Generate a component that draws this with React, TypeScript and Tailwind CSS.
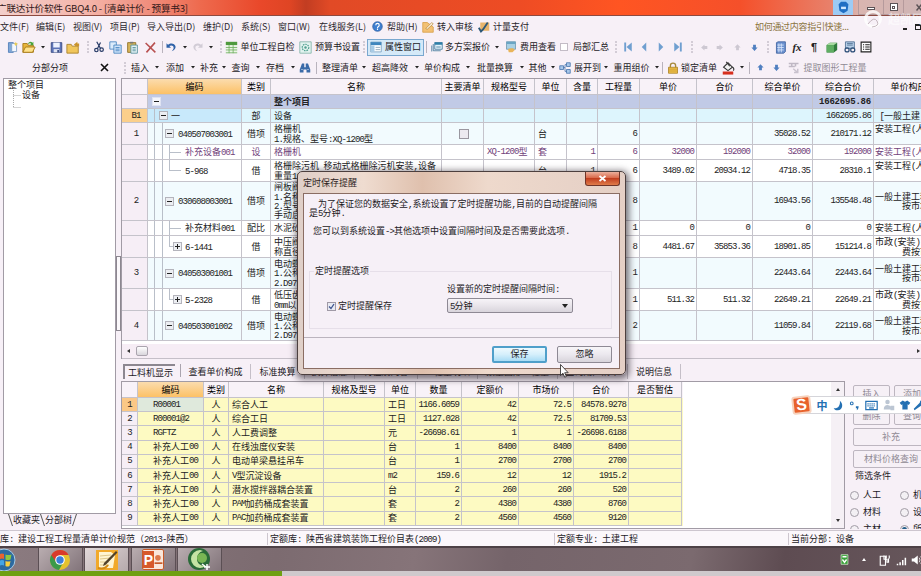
import { ReactNode } from "react";
import clsx from "clsx";

// latin characters are drawn half as wide as the chinese ones
function Txt({ children }: { children: string }) {
  return (
    <>
      {children.split(/([\x20-\x7e]+)/).map((part, i) =>
        i % 2 ? (
          <span
            key={i}
            className="whitespace-pre font-['Liberation_Mono','Noto_Sans_CJK_SC',monospace] leading-[0] tracking-[-0.9px]"
          >
            {part}
          </span>
        ) : (
          part
        ),
      )}
    </>
  );
}

type SvgProps = { children: ReactNode; size?: number };

function Svg({ children, size = 13 }: SvgProps) {
  return (
    <svg width={size} height={size} viewBox="0 0 16 16" fill="none" className="shrink-0">
      {children}
    </svg>
  );
}

const Caret = () => (
  <svg width="4" height="3" viewBox="0 0 4 3">
    <path d="M0 0h4L2 2.6z" fill="#222" />
  </svg>
);
const Sep = () => <span className="h-3 w-px bg-[#b9b3bd]" />;
const Grip = () => <span className="h-3 border-l-2 border-dotted border-[#d3ccd6]" />;

const IconNew = () => (
  <Svg>
    <path d="M3 2h6v12H3z" fill="#7fa8d8" stroke="#4a79b5" />
    <path d="M7 3h6v10H7z" fill="#f4f8ff" stroke="#7b9cc6" />
    <path d="M12 1l1 2 2 .5-2 1-1 2-.8-2-2-1 2-.5z" fill="#f2cf4a" />
  </Svg>
);
const IconOpen = () => (
  <Svg size={14}>
    <path d="M1 4h5l1 2h6v8H1z" fill="#e8b53a" stroke="#a57818" />
    <path d="M1 14l3-6h11l-3 6z" fill="#ffe28a" stroke="#a57818" />
    <path d="M7 5c0-3 3-4 5-2l1-1v4H9l1.500-1.500C10 3.500 8.500 3.500 7 5z" fill="#49a33a" />
  </Svg>
);
const IconSave = () => (
  <Svg>
    <path d="M1.500 2h13v12h-13z" fill="#5d74b8" stroke="#34467e" />
    <path d="M4 2h8v6H4z" fill="#eef3ff" />
    <path d="M4.500 10h7v4h-7z" fill="#dfe4f2" />
    <path d="M9 11h2v3H9z" fill="#34467e" />
  </Svg>
);
const IconFolder = () => (
  <Svg size={14}>
    <path d="M1 5h5l1 2h7v8H1z" fill="#f1c65b" stroke="#a9802a" />
    <path d="M9 5l4-3v2h2v3h-4z" fill="#c9932c" />
  </Svg>
);
const IconCut = () => (
  <Svg size={12}>
    <path d="M5 1l5 9M10 2L6 10" stroke="#263a66" strokeWidth="1.600" />
    <circle cx="4.500" cy="12" r="2.300" stroke="#263a66" strokeWidth="1.600" />
    <circle cx="11.500" cy="11.500" r="2.300" stroke="#263a66" strokeWidth="1.600" />
  </Svg>
);
const IconCopy = () => (
  <Svg>
    <path d="M1 1h8v9H1z" fill="#dcebfb" stroke="#3f7fbd" />
    <path d="M6 5h9v10H6z" fill="#cfe3fa" stroke="#3f7fbd" />
    <path d="M8 8h5M8 10h5M8 12h5" stroke="#3f7fbd" />
  </Svg>
);
const IconPaste = () => (
  <Svg>
    <path d="M2 2h10v12H2z" fill="#d6b45a" stroke="#8a6a1e" />
    <path d="M5 1h4v2H5z" fill="#777" />
    <path d="M6 5h8v10H6z" fill="#e4f1f4" stroke="#4b8a98" />
    <path d="M8 8h4M8 10h4M8 12h4" stroke="#4b8a98" />
  </Svg>
);
const IconDelete = () => (
  <Svg size={13}>
    <path d="M2 2.500L14 14M13.500 2L3 14" stroke="#b85050" strokeWidth="1.900" />
  </Svg>
);
const IconUndo = ({ color = "#2f62a8" }: { color?: string }) => (
  <Svg size={12}>
    <path d="M2 3v6h6L5.800 6.800C8 5 11.500 6 11.500 9c0 2-1 3-2.500 4.500 4-1 5.500-4 5-6.500C13 3 7.500 1.800 4 5z" fill={color} />
  </Svg>
);
const IconRedo = () => (
  <span className="flex -scale-x-100">
    <IconUndo color="#d2ccd6" />
  </span>
);
const IconCheckTable = () => (
  <Svg>
    <path d="M1 1h14v14H1z" fill="#e9f5e4" />
    <path d="M1 1h14v4H1z" fill="#4f9a3e" />
    <path d="M1 8h14M1 11h14M1 14.500h14M5 5v10M10 5v10" stroke="#6fae5f" />
  </Svg>
);
const IconSettings = () => (
  <Svg>
    <path d="M1 1h14v14H1z" fill="#e2f3ef" stroke="#7fb3a6" />
    <circle cx="8" cy="8" r="4" stroke="#4f9f8f" strokeWidth="1.500" strokeDasharray="2 1" />
    <circle cx="8" cy="8" r="1.500" fill="#4f9f8f" />
  </Svg>
);
const IconWindow = () => (
  <Svg size={12}>
    <path d="M1 1.500h14v13H1z" fill="#fff" stroke="#6d95b8" />
    <path d="M1 1.500h14v4H1z" fill="#3f86bd" />
    <path d="M1 6h5v8.500H1z" fill="#a7cbe6" />
    <path d="M7.500 8.500h6M7.500 11.500h6" stroke="#7b95ab" />
  </Svg>
);
const IconPlans = () => (
  <Svg size={12}>
    <path d="M5 2h10v9H5z" fill="#e3f2fb" stroke="#2d6c92" />
    <path d="M5 2h10v3H5z" fill="#2d7fa8" />
    <path d="M3 4v9h10M1 6v8" stroke="#2d6c92" />
    <path d="M7 8h6" stroke="#2d6c92" />
  </Svg>
);
const IconCost = () => (
  <Svg size={12}>
    <path d="M2 1h12v10H2z" fill="#a8d0e4" stroke="#6a93aa" />
    <path d="M2 1h12v3H2z" fill="#6aa5c4" />
    <path d="M4 11c3-2 8-2 9 1l-3 3H5z" fill="#e9b45a" />
  </Svg>
);
const IconBars = () => (
  <Svg size={12}>
    <path d="M3 2h2.500v12H3z" fill="#6f9fd0" />
    <path d="M13 2v12L6 8z" fill="#6f9fd0" />
  </Svg>
);
const IconTri = () => (
  <Svg size={12}>
    <path d="M11 2v12L5 8z" fill="#6f9fd0" />
  </Svg>
);
const IconArrow = ({ color = "#cdc8d2", cls = "" }: { color?: string; cls?: string }) => (
  <span className={cls}>
    <Svg size={9}>
      <path d="M8 2l5.500 6H10.500v5h-5V8H2.500z" fill={color} />
    </Svg>
  </span>
);
const IconCalc = () => (
  <Svg>
    <path d="M3 2l2-1h9v12l-2 2H3z" fill="#6c92d0" stroke="#3b5f9c" />
    <path d="M4 5h8M4 8h8M4 11h8M6 3v11M9 3v11" stroke="#dbe7fb" />
  </Svg>
);
const IconCube = () => (
  <Svg>
    <path d="M2 5l4-3h9v9l-4 3H2z" fill="#2f7a3c" />
    <path d="M2 5h9v9H2z" fill="#5fae62" />
    <path d="M2 5l4-3h9l-4 3z" fill="#a7d9a0" />
  </Svg>
);
const IconReport = () => (
  <Svg>
    <path d="M3 1h11v8H3z" fill="#b7cfe8" stroke="#49698c" />
    <path d="M5 3h7M5 5h7" stroke="#49698c" />
    <circle cx="5" cy="11" r="2.500" stroke="#2d4f78" strokeWidth="1.500" />
    <circle cx="12" cy="11" r="2.500" stroke="#2d4f78" strokeWidth="1.500" />
  </Svg>
);
const IconList = () => (
  <Svg size={12}>
    <path d="M1.500 1.500h13v13h-13z" fill="#fff" stroke="#222" strokeWidth="1.500" />
    <path d="M4 5h1.500M7 5h6M4 8h1.500M7 8h6M4 11h1.500M7 11h6" stroke="#222" strokeWidth="1.500" />
  </Svg>
);
const IconFind = () => (
  <Svg size={12}>
    <path d="M4 2h3v5h2V2h3l3 8v4h-5v-4H6v4H1v-4z" fill="#3a6ba8" />
    <path d="M3 10h2M11 10h2" stroke="#cfe0f5" />
  </Svg>
);
const IconExpand = () => (
  <Svg size={12}>
    <path d="M1 5h5v5H1zM10 1h5v5h-5zM10 10h5v5h-5z" fill="#a8c7ea" stroke="#3f6ea8" />
    <path d="M6 7.500h2M8 3.500v9M8 3.500h2M8 12.500h2" stroke="#3f6ea8" />
  </Svg>
);
const IconLock = () => (
  <Svg size={12}>
    <path d="M4.500 8V5a3.500 3.500 0 017 0v3" stroke="#a7893c" strokeWidth="1.800" />
    <path d="M2 7h12v8H2z" fill="#eec04c" stroke="#a57c1c" />
    <path d="M2.500 9.500h11M2.500 12h11" stroke="#c8982c" />
  </Svg>
);
const IconBucket = () => (
  <Svg size={14}>
    <path d="M3 7l5-5 5 5-5 4z" fill="#f3f3f3" stroke="#333" strokeWidth="1.300" />
    <path d="M6 1l4 5M13 7c2 1 2 3 1 4" stroke="#333" strokeWidth="1.300" />
    <path d="M2 12h12v3.500H2z" fill="#d62f1e" />
  </Svg>
);
const IconExtract = () => (
  <Svg size={12}>
    <path d="M1 2h13M1 6h8M5 2v5M10 2v4" stroke="#bfb8c4" strokeWidth="2" />
    <path d="M7 9l6 5M13 9v5H8" stroke="#c9c2ce" strokeWidth="2" />
  </Svg>
);

const T = ({ children, gray }: { children: string; gray?: boolean }) => (
  <span className={gray ? "text-[#8f8993]" : "text-[#1c1a1e]"}>
    <Txt>{children}</Txt>
  </span>
);

function TitleBar() {
  return (
    <header className="relative flex h-4 shrink-0 items-center border-b border-[#8d4a40] bg-[linear-gradient(90deg,#f3cfcb_0px,#f4b3a8_90px,#f08d7c_150px,#ee6a4e_200px,#e9482a_260px,#df4524_290px,#c23d22_306px,#e14a26_330px,#ee4c24_520px,#ff5522_620px,#f5502a_740px,#e8806a_830px,#d9b5b0_860px,#cfb5b5_921px)]">
      <span className="-ml-[3px] whitespace-nowrap text-[9.600px] tracking-[-0.2px] text-[#32181a]">广联达计价软件 GBQ4.0 - [清单计价 - 预算书3]</span>
      <div className="ml-auto flex h-full">
        <span className="mr-[5px] flex w-5 items-center justify-center bg-[#9ccbf5]">
          <Svg>
            <path d="M2 4l3-3h6l3 3-1 8-5 3-5-3z" fill="#1f6fc4" />
            <path d="M5 7h6v3H5z" fill="#cfe9ff" />
          </Svg>
        </span>
        <span className="flex w-[26px] items-end justify-center border border-t-0 border-[#b59a9c] pb-1">
          <i className="h-[3px] w-2 border border-[#5c5356] bg-white" />
        </span>
        <span className="flex w-[19px] items-center justify-center border-b border-[#b59a9c]">
          <i className="flex h-2 w-2 items-center justify-center border border-[#5c5356] bg-white">
            <b className="h-[3px] w-[3px] border border-[#5c5356]" />
          </i>
        </span>
        <span className="flex w-[18px] items-center justify-end border-b border-l border-[#b59a9c]">
          <svg width="5" height="7" viewBox="0 0 5 7">
            <path d="M.5.5l5 6M5.500.5l-5 6" stroke="#5c5356" strokeWidth="1.500" />
          </svg>
        </span>
      </div>
    </header>
  );
}

function MenuBar() {
  return (
    <nav className="grid h-[21px] shrink-0 grid-cols-[36px_37px_37px_37px_56px_38px_37px_41px_53px_15px_35px_15px_41px_15px_262px_96px_1fr] items-center whitespace-nowrap text-[9px] text-[#2a262c]">
      <span>文件(F)</span>
      <span>编辑(E)</span>
      <span>视图(V)</span>
      <span>项目(P)</span>
      <span>导入导出(D)</span>
      <span>维护(D)</span>
      <span>系统(S)</span>
      <span>窗口(W)</span>
      <span>在线服务(L)</span>
      <Svg size={11}>
        <circle cx="8" cy="8" r="7" fill="#3f7fd0" stroke="#2a5a9e" />
        <path d="M5.500 6c0-3.500 5-3.500 5 0 0 2-2.500 1.800-2.500 4M8 11v2" stroke="#fff" strokeWidth="1.700" />
      </Svg>
      <span>帮助(H)</span>
      <Svg size={12}>
        <path d="M1 2h6l8 6v7H1z" fill="#f3c173" stroke="#d49a42" />
        <path d="M5 10l8-8 2 2-8 7z" fill="#fbf0d8" stroke="#b98a42" />
      </Svg>
      <span>转入审核</span>
      <Svg size={12}>
        <path d="M3 2h12v11H3z" fill="#e7b46b" />
        <path d="M1 9l3 5 3-3 6-9" stroke="#2d5877" strokeWidth="2.500" />
      </Svg>
      <span>计量支付</span>
      <span className="tracking-[-0.3px] text-[#8b7440]">如何通过内容指引快速...</span>
      <span className="flex items-center justify-end gap-2">
        <i className="mt-1 h-0.5 w-1 bg-[#222]" />
        <i className="h-1.5 w-1.5 border border-t-2 border-[#222]" />
      </span>
    </nav>
  );
}

function MainToolbar() {
  return (
    <div className="grid h-5 shrink-0 grid-cols-[16px_18px_10px_16px_18px_11px_12px_20px_15px_20px_4px_14px_13px_14px_12px_8px_13px_59px_17px_47px_6px_57px_5px_15px_47px_12px_16px_38px_14px_40px_9px_15px_17px_17px_18px_10px_14px_17px_19px_15px_12px_12px_22px_12px_22px_14px_20px] items-center justify-items-center whitespace-nowrap pl-1">
      <IconNew />
      <IconOpen />
      <Caret />
      <IconSave />
      <IconFolder />
      <Grip />
      <IconCut />
      <IconCopy />
      <IconPaste />
      <IconDelete />
      <Sep />
      <IconUndo />
      <Caret />
      <IconRedo />
      <Caret />
      <Grip />
      <IconCheckTable />
      <T>单位工程自检</T>
      <IconSettings />
      <T>预算书设置</T>
      <Grip />
      <button className="flex h-[17px] w-full items-center gap-[3px] border border-[#79a7cf] bg-[#d5e9f8] pl-0.5">
        <IconWindow />
        <T>属性窗口</T>
      </button>
      <Sep />
      <IconPlans />
      <T>多方案报价</T>
      <Caret />
      <IconCost />
      <T>费用查看</T>
      <span className="h-2 w-2 border border-[#c3bcc6] bg-white" />
      <T>局部汇总</T>
      <Grip />
      <IconBars />
      <IconTri />
      <span className="-scale-x-100">
        <IconTri />
      </span>
      <span className="-scale-x-100">
        <IconBars />
      </span>
      <Grip />
      <IconArrow cls="-rotate-90" />
      <IconArrow cls="rotate-90" />
      <IconArrow />
      <IconArrow cls="rotate-180" color="#4f7fc0" />
      <Grip />
      <IconCalc />
      <span className="font-['Liberation_Serif',serif] text-[11px] leading-none font-bold text-[#222] italic">fx</span>
      <span className="font-['Liberation_Sans',sans-serif] text-[11px] leading-none font-bold text-[#222]">¶</span>
      <IconCube />
      <IconReport />
      <IconList />
    </div>
  );
}

function SubToolbar() {
  return (
    <div className="grid h-[21px] shrink-0 grid-cols-[8px_22px_12px_24px_11px_22px_8px_25px_9px_26px_9px_16px_6px_42px_6px_46px_7px_44px_8px_46px_7px_25px_6px_17px_29px_7px_45px_5px_7px_13px_40px_18px_9px_7px_14px_18px_17px_66px] items-center justify-items-center whitespace-nowrap">
      <Grip />
      <T>插入</T>
      <Caret />
      <T>添加</T>
      <Caret />
      <T>补充</T>
      <Caret />
      <T>查询</T>
      <Caret />
      <T>存档</T>
      <Caret />
      <IconFind />
      <Sep />
      <T>整理清单</T>
      <Caret />
      <T>超高降效</T>
      <Caret />
      <T>单价构成</T>
      <Caret />
      <T>批量换算</T>
      <Caret />
      <T>其他</T>
      <Caret />
      <IconExpand />
      <T>展开到</T>
      <Caret />
      <T>重用组价</T>
      <Caret />
      <Sep />
      <IconLock />
      <T>锁定清单</T>
      <IconBucket />
      <Caret />
      <Sep />
      <IconArrow color="#4f7fc0" />
      <IconArrow color="#4f7fc0" cls="rotate-180" />
      <IconExtract />
      <T gray>提取图形工程量</T>
    </div>
  );
}

type Row = {
  h: string;
  no?: string;
  level: number;
  box?: "+" | "-";
  code: string;
  kind?: string;
  name: string[];
  spec?: string;
  unit?: string;
  per?: string;
  qty?: string;
  price?: string;
  total?: string;
  cPrice?: string;
  cTotal?: string;
  fee?: string[];
  tone?: "sum" | "part" | "item" | "extra";
};

const rows: Row[] = [
  { h: "h-3.5", level: 0, box: "-", code: "", name: ["整个项目"], cTotal: "1662695.86", tone: "sum" },
  { h: "h-3.5", no: "B1", level: 1, box: "-", code: "一", kind: "部", name: ["设备"], cTotal: "1662695.86", fee: [" [一般土建"], tone: "part" },
  { h: "h-[22px]", no: "1", level: 2, box: "-", code: "040507003001", kind: "借项", name: ["格栅机", "1.规格、型号:XQ-1200型"], unit: "台", qty: "6", cPrice: "35028.52", cTotal: "210171.12", fee: ["安装工程(人", " "], tone: "item" },
  { h: "h-[15px]", level: 3, code: "补充设备001", kind: "设", name: ["格栅机"], spec: "XQ-1200型", unit: "套", per: "1", qty: "6", price: "32000", total: "192000", cPrice: "32000", cTotal: "192000", fee: ["安装工程(人"], tone: "extra" },
  { h: "h-[22px]", level: 3, code: "5-968", kind: "借", name: ["格栅除污机 移动式格栅除污机安装,设备", "重量1t以内"], unit: "台", per: "1", qty: "6", price: "3489.02", total: "20934.12", cPrice: "4718.35", cTotal: "28310.1", fee: ["安装工程(人", " "] },
  { h: "h-[39px]", no: "2", level: 2, box: "-", code: "030608003001", kind: "借项", name: ["闸板阀", "1.名称", "2.型号", "手动启"], qty: "8", cPrice: "16943.56", cTotal: "135548.48", fee: ["一般土建工程", "      按市场"], tone: "item" },
  { h: "h-[15px]", level: 3, code: "补充材料001", kind: "配比", name: ["水泥砂"], qty: "1", price: "0", total: "0", cPrice: "0", cTotal: "0", fee: ["安装工程(人"] },
  { h: "h-[22px]", level: 3, box: "+", code: "6-1441", kind: "借", name: ["中压阀", "称直径"], qty: "8", price: "4481.67", total: "35853.36", cPrice: "18901.85", cTotal: "151214.8", fee: ["市政(安装)", "      费按市"] },
  { h: "h-[31px]", no: "3", level: 2, box: "-", code: "040503001001", kind: "借项", name: ["电动蝶", "1.公称", "2.D971"], qty: "1", cPrice: "22443.64", cTotal: "22443.64", fee: ["一般土建工程", "      按市场"], tone: "item" },
  { h: "h-[22px]", level: 3, box: "+", code: "5-2328", kind: "借", name: ["低压齿", "0mm以"], qty: "1", price: "511.32", total: "511.32", cPrice: "22649.21", cTotal: "22649.21", fee: ["市政(安装)", "      费按市"] },
  { h: "h-[30px]", no: "4", level: 2, box: "-", code: "040503001002", kind: "借项", name: ["电动蝶", "1.公称", "2.D971"], qty: "2", cPrice: "11059.84", cTotal: "22119.68", fee: ["一般土建工程", "      按市场"], tone: "item" },
];

const indent = ["pl-1", "pl-[11px]", "pl-[17px]", "pl-[25px]"];

const gridCols =
  "grid grid-cols-[26px_94px_29px_171px_42px_51px_32px_31px_42px_57px_56px_60px_61px_70px]";

function Cell({ children, right, className }: { children?: ReactNode; right?: boolean; className?: string }) {
  return (
    <div
      className={clsx(
        "flex min-w-0 items-center overflow-hidden border-r border-b border-[#c5c3cb] whitespace-nowrap",
        right ? "justify-end pr-0.5" : "pl-[3px]",
        className,
      )}
    >
      {children}
    </div>
  );
}

function Lines({ lines, className }: { lines: string[]; className?: string }) {
  return (
    <div className={clsx("flex flex-col leading-[9.300px]", className)}>
      {lines.map((line, i) => (
        <span key={i} className="h-[9.300px] whitespace-pre">
          <Txt>{line}</Txt>
        </span>
      ))}
    </div>
  );
}

function ItemRow({ row }: { row: Row }) {
  const num = (v?: string) => <Cell right>{v && <Txt>{v}</Txt>}</Cell>;

  return (
    <div
      className={clsx(
        gridCols,
        row.h,
        "shrink-0 text-[#222]",
        row.tone === "sum" && "bg-[#c1cae6] font-bold",
        row.tone === "part" && "bg-[#ddf5fd]",
        row.tone === "item" && "bg-[#f2fbfe]",
        row.tone === "extra" && "bg-white text-[#71427a]",
        !row.tone && "bg-white",
      )}
    >
      <Cell className={clsx("justify-center", row.tone === "part" ? "bg-[#fbcf8b]" : "bg-[#f6eef6]")}>{row.no && <Txt>{row.no}</Txt>}</Cell>
      <Cell className={clsx("relative pl-0!", row.tone === "part" && "bg-[#c8e9fb]")}>
        {/* guide lines of the tree */}
        {row.level > 0 && <i className="absolute inset-y-0 left-1.5 w-px bg-[#b9bfc9]" />}
        {row.level > 1 && <i className="absolute inset-y-0 left-3.5 w-px bg-[#b9bfc9]" />}
        {row.level > 2 && (
          <>
            <i className={clsx("absolute top-0 left-[21px] w-px bg-[#b9bfc9]", row.code.startsWith("补充") ? "bottom-0" : "h-1/2")} />
            <i className="absolute left-[21px] h-px w-3 bg-[#b9bfc9]" />
          </>
        )}
        <div className={clsx("relative flex items-center", indent[row.level])}>
          {row.box ? (
            <span className={clsx("relative flex h-[9px] w-[9px] shrink-0 items-center justify-center border", row.tone === "sum" ? "border-[#dfe3f2] bg-[#f4f5fb]" : "border-[#b4b4bc] bg-[#eceef2]")}>
              <i className="absolute h-px w-[5px] bg-[#222]" />
              {row.box === "+" && <i className="absolute h-[5px] w-px bg-[#222]" />}
            </span>
          ) : (
            <span className="w-[9px]" />
          )}
          <span className={row.level === 2 ? "pl-1" : "pl-[3px]"}>
            <Txt>{row.code}</Txt>
          </span>
        </div>
      </Cell>
      <Cell className="justify-center pl-0!">{row.kind}</Cell>
      <Cell className="pl-0.5">
        <Lines lines={row.name} />
      </Cell>
      <Cell className="justify-center">
        {row.no === "1" && <span className="h-2.5 w-2.5 border border-[#9a97a0] bg-[#eceaf0]" />}
      </Cell>
      <Cell className="pl-0.5">{row.spec && <Txt>{row.spec}</Txt>}</Cell>
      <Cell className="pl-0.5">{row.unit}</Cell>
      {num(row.per)}
      {num(row.qty)}
      {num(row.price)}
      {num(row.total)}
      {num(row.cPrice)}
      <Cell right className={row.tone === "sum" ? "[&>span]:tracking-[-0.2px]" : ""}>
        {row.cTotal && <Txt>{row.cTotal}</Txt>}
      </Cell>
      <Cell className="pl-px">
        <Lines lines={row.fee ?? []} />
      </Cell>
    </div>
  );
}

function ItemGrid() {
  const heads = ["", "编码", "类别", "名称", "主要清单", "规格型号", "单位", "含量", "工程量", "单价", "合价", "综合单价", "综合合价", "单价构成"];

  return (
    <section className="flex h-[281px] shrink-0 flex-col overflow-hidden border-t border-l border-[#a19ba5]">
      <div className={clsx(gridCols, "h-4 shrink-0 bg-[#f8f2f8]")}>
        {heads.map((head, i) => (
          <Cell key={i} className={clsx("justify-center pl-0!", head === "编码" && "bg-[linear-gradient(#fbdcae,#fcc166)]")}>
            {head}
          </Cell>
        ))}
      </div>
      <div className="flex h-[249px] shrink-0 flex-col overflow-hidden">
        {rows.map((row, i) => (
          <ItemRow key={i} row={row} />
        ))}
        <div className="h-1 shrink-0 bg-white" />
      </div>
      <div className="flex h-[15px] items-center border-b border-[#c5bfc8] bg-[#f6edf5]">
        <span className="ml-[5px] border-y-2 border-r-3 border-y-transparent border-r-[#333]" />
        <span className="ml-1.5 h-2.5 w-3 rounded-xs border border-[#aaa4ae] bg-[linear-gradient(#fff,#d9d6dc)]" />
        <span className="mr-px ml-auto border-y-2 border-l-3 border-y-transparent border-l-[#333]" />
      </div>
    </section>
  );
}

function DetailTabs() {
  return (
    <div className="grid h-[23px] shrink-0 grid-cols-[52px_6px_70px_54px_50px_63px_60px_80px_70px_53px] items-start whitespace-nowrap pt-[5px] pl-0.5 text-[9px]">
      <span className="flex h-[15px] items-center border-t-2 border-l-2 border-[#8c8790] pl-[3px] text-[#1c1a1e]">工料机显示</span>
      <span className="h-[13px] border-r border-[#aaa4ae]" />
      {["查看单价构成", "标准换算", "换算信息", "特征及内容", "工程量明细", "按量图形工程量", "查询用户清单", "说明信息"].map((tab) => (
        <span key={tab} className="flex h-[15px] items-center justify-center border-r border-[#c5bfc8] text-[#1c1a1e]">
          {tab}
        </span>
      ))}
    </div>
  );
}

const resources = [
  ["R00001", "综合人工", "工日", "1166.6059", "42", "72.5", "84578.9278"],
  ["R00001@2", "综合工日", "工日", "1127.028", "42", "72.5", "81709.53"],
  ["RGFTZ", "人工费调整", "元", "-26698.61", "1", "1", "-26698.6188"],
  ["补充人工00", "在线浊度仪安装", "台", "1", "8400", "8400", "8400"],
  ["补充人工00", "电动单梁悬挂吊车", "台", "1", "2700", "2700", "2700"],
  ["补充人工00", "V型沉淀设备", "m2", "159.6", "12", "12", "1915.2"],
  ["补充人工00", "潜水搅拌器耦合装置", "台", "2", "260", "260", "520"],
  ["补充人工00", "PAM加药桶成套装置", "套", "2", "4380", "4380", "8760"],
  ["补充人工00", "PAC加药桶成套装置", "套", "2", "4560", "4560", "9120"],
];

const detailCols = "grid grid-cols-[16px_66px_25px_95px_61px_31px_46px_57px_55px_55px_53px]";

function ResourceGrid() {
  const heads = ["", "编码", "类别", "名称", "规格及型号", "单位", "数量", "定额价", "市场价", "合价", "是否暂估"];

  return (
    <section className="-mt-px flex h-[148px] w-[724px] shrink-0 border border-[#a19ba5] bg-white">
      <div className="w-[561px]">
        <div className={clsx(detailCols, "h-4 bg-[#f8f2f8]")}>
          {heads.map((head, i) => (
            <Cell key={i} className={clsx("justify-center pl-0!", head === "编码" && "bg-[linear-gradient(#fbdcae,#fcc166)]")}>
              {head}
            </Cell>
          ))}
        </div>
        {resources.map(([code, name, unit, qty, quota, market, total], i) => (
          <div key={i} className={clsx(detailCols, "h-[14.2px] bg-[#fdfac2] text-[#222]")}>
            <Cell className={clsx("justify-center pl-0!", i === 0 ? "bg-[#fbc886]" : "bg-[#f6eef6]")}>
              <Txt>{String(i + 1)}</Txt>
            </Cell>
            <Cell className={clsx("pl-[15px]", i === 0 && "bg-[#dfe9dc]")}>
              <Txt>{code}</Txt>
            </Cell>
            <Cell className="justify-center pl-0!">人</Cell>
            <Cell className="pl-0.5">
              <Txt>{name}</Txt>
            </Cell>
            <Cell />
            <Cell className="pl-0.5">
              <Txt>{unit}</Txt>
            </Cell>
            {[qty, quota, market, total].map((v, j) => (
              <Cell key={j} right>
                <Txt>{v}</Txt>
              </Cell>
            ))}
            <Cell />
          </div>
        ))}
      </div>
      <div className="ml-auto flex w-[13px] flex-col items-center justify-between bg-[#f5f0f5] py-1.5">
        <span className="border-x-2 border-b-3 border-x-transparent border-b-[#333]" />
        <span className="border-x-2 border-t-3 border-x-transparent border-t-[#333]" />
      </div>
    </section>
  );
}

function SideButton({ children, className }: { children: string; className?: string }) {
  return (
    <button className={clsx("flex h-[18px] shrink-0 items-center justify-center rounded-xs border border-[#bdb6c0] bg-[#f6f0f6] whitespace-nowrap text-[#8f8993]", className)}>
      {children}
    </button>
  );
}

function Radio({ label, checked }: { label: string; checked?: boolean }) {
  return (
    <label className="flex items-center gap-1 whitespace-nowrap text-[#1c1a1e]">
      <span className="flex h-[9px] w-[9px] shrink-0 items-center justify-center rounded-full border border-[#a29ca6] bg-[#f3f0f4]">
        {checked && <i className="h-[5px] w-[5px] rounded-full bg-[#235c88]" />}
      </span>
      {label}
    </label>
  );
}

function ActionPanel() {
  return (
    <aside className="h-[147px] w-[76px] shrink-0 overflow-hidden pt-[3px] pl-2">
      <div className="flex w-[90px] flex-col">
        <div className="grid grid-cols-[37px_36px] gap-1">
          <SideButton>插入</SideButton>
          <SideButton>添加</SideButton>
        </div>
        <div className="mt-1 grid grid-cols-[37px_36px] gap-1">
          <SideButton>删除</SideButton>
          <SideButton>查询</SideButton>
        </div>
        <SideButton className="mt-[3px] w-[76px]">补充</SideButton>
        <SideButton className="mt-1 w-[76px]">材料价格查询</SideButton>
      </div>
      <fieldset className="mt-0.5 -ml-[3px] w-[90px]">
        <legend className="pl-[5px] text-[#1c1a1e]">筛选条件</legend>
        <div className="mt-[7px] grid grid-cols-[50px_40px] gap-y-[5px]">
          <Radio label="人工" />
          <Radio label="机械" />
          <Radio label="材料" />
          <Radio label="设备" />
          <Radio label="主材" />
          <Radio label="所有" checked />
        </div>
      </fieldset>
    </aside>
  );
}

function ProjectTree() {
  return (
    <aside className="flex w-[116px] shrink-0 flex-col pl-[3px]">
      <div className="flex h-[21px] shrink-0 items-center text-[#1c1a1e]">
        <span className="ml-[29px]">分部分项</span>
        <svg width="9" height="9" viewBox="0 0 9 9" className="mr-[7px] ml-auto">
          <path d="M1 1l7 7M8 1L1 8" stroke="#111" strokeWidth="1.600" />
        </svg>
      </div>
      <div className="h-[436px] shrink-0 border border-[#a19ba5] bg-white text-[#1c1a1e]">
        <p className="ml-1 h-[11px] leading-[11px]">整个项目</p>
        <p className="ml-[9px] flex h-[11px] items-start leading-[10px]">
          <svg width="9" height="18" viewBox="0 0 9 18" className="shrink-0">
            <path d="M.5 0v17.500M.5 5.500h7M.5 17.500h7" stroke="#aaa" strokeDasharray="1 1" />
          </svg>
          设备
        </p>
      </div>
      <div className="flex h-3 items-center pl-[5px] text-[#1c1a1e]">
        <Slash flip />
        <span>收藏夹</span>
        <Slash flip />
        <span>分部树</span>
        <Slash />
      </div>
    </aside>
  );
}

function Slash({ flip }: { flip?: boolean }) {
  return (
    <svg width="5" height="12" viewBox="0 0 5 12" className="shrink-0">
      <path d={flip ? "M.5 0l4 12" : "M4.500 0l-4 12"} stroke="#555" />
    </svg>
  );
}

function StatusBar() {
  return (
    <footer className="grid h-4 shrink-0 grid-cols-[267px_287px_234px_1fr] items-center border-t border-[#cdc6cf] bg-[#fbf7fb] whitespace-nowrap text-[#1c1a1e]">
      <span>
        <Txt>库: 建设工程工程量清单计价规范（2013-陕西）</Txt>
      </span>
      <span className="border-l border-[#cdc6cf] pl-0.5">
        <Txt>定额库: 陕西省建筑装饰工程价目表(2009)</Txt>
      </span>
      <span className="border-l border-[#cdc6cf] pl-0.5">
        <Txt>定额专业: 土建工程</Txt>
      </span>
      <span className="border-l border-[#cdc6cf] pl-0.5">
        <Txt>当前分部: 设备</Txt>
      </span>
    </footer>
  );
}

function TaskButton({ children, active }: { children: ReactNode; active?: boolean }) {
  return (
    <span
      className={clsx(
        "flex h-full w-[45px] shrink-0 items-center justify-center border-x border-[#5b4f54]",
        active ? "bg-[linear-gradient(135deg,#e2d9da,#b5a9ab)]" : "bg-[linear-gradient(135deg,#b9adb0,#82747a)]",
      )}
    >
      {children}
    </span>
  );
}

function TaskBar() {
  return (
    <div className="relative flex h-[25px] shrink-0 items-center gap-[1.500px] border-t-2 border-[#4d4146] bg-[linear-gradient(100deg,#8b7b80_0%,#7c6b70_30%,#867479_45%,#75646a_55%,#7b6a6f_75%,#5e4c52_85%,#66565b_100%)]">
      <span className="flex h-6 w-9 shrink-0 items-center">
        <svg width="17" height="23" viewBox="0 0 17 23">
          <circle cx="4" cy="12" r="11" fill="#2c6aa0" stroke="#a9cbe4" />
          <path d="M0 6q2-1 4 0v5q-2-1-4 0z" fill="#e9632f" />
          <path d="M5.500 6.500q3 1 6 0l-1 5q-3 1-5 0z" fill="#8cc63f" />
          <path d="M0 12.500q2-1 4 0v5q-2-1-4 0z" fill="#44a5e5" />
          <path d="M5.500 13q3 1 5 0l-1 5q-2 1-4 0z" fill="#f9cf3d" />
        </svg>
      </span>
      <TaskButton>
        <svg width="22" height="22" viewBox="0 0 22 22">
          <circle cx="11" cy="11" r="10" fill="#e4c22e" />
          <path d="M2.300 6A10 10 0 0010 21l4.500-8L11 11z" fill="#3b9a48" />
          <path d="M2.300 6A10 10 0 0119.700 6H11L7 13z" fill="#d93a2b" />
          <circle cx="11" cy="11" r="4.800" fill="#fff" />
          <circle cx="11" cy="11" r="3.700" fill="#3c7fd9" />
        </svg>
      </TaskButton>
      <TaskButton active>
        <svg width="24" height="22" viewBox="0 0 24 22">
          <path d="M1 1h22v20H1z" fill="#f1a92b" />
          <path d="M4 3h12l4 3-2 13H4z" fill="#fff5d2" />
          <path d="M5 7l11-1M5 10l10-1M5 13h9M5 16h9" stroke="#dfc98c" />
          <path d="M9 14L21 2l1.500 1.500L11 15.500 8 17z" fill="#51422a" />
          <path d="M3 19c4 1 8 0 10-3" stroke="#d38b14" strokeWidth="2" fill="none" />
        </svg>
      </TaskButton>
      <TaskButton>
        <span className="relative flex h-[21px] w-[22px] items-center rounded-xs border border-[#c85a28] bg-[#fae7da]">
          <b className="flex h-[17px] w-[13px] items-center justify-center bg-[#d7592a] font-['Liberation_Sans',sans-serif] text-[14px] leading-none text-white">P</b>
          <Svg size={9}>
            <circle cx="7" cy="5" r="5" fill="#dc7a4c" />
            <path d="M1 13h14v3H1z" fill="#c85a28" />
          </Svg>
        </span>
      </TaskButton>
      <TaskButton>
        <svg width="26" height="23" viewBox="0 0 26 23">
          <circle cx="12" cy="11" r="11" fill="#2a6a38" />
          <path d="M13 2a9 9 0 000 18c2 0 4-1 5-2-5 0-8-3-8-7s2-7 6-8z" fill="#c6e3a4" />
          <circle cx="15" cy="10" r="5" fill="#79b654" />
          <path d="M15 16l4 3M20 16v6M17 19h6" stroke="#fff" strokeWidth="1.500" />
        </svg>
      </TaskButton>
      <div className="ml-auto grid grid-cols-[18px_22px_17px_20px_9px] items-center justify-items-center">
        <Svg size={11}>
          <path d="M3 1h10v14H3z" fill="#3aa23a" stroke="#d7efd0" />
          <path d="M5 8l3 4 3-4M5 4h6" stroke="#fff" strokeWidth="2" />
        </Svg>
        <span className="border-x-2 border-b-3 border-x-transparent border-b-white" />
        <Svg size={12}>
          <path d="M3 3h7v12H3z" stroke="#fff" strokeWidth="1.500" />
          <path d="M8 2v5h4v4h2V6M11 2v4M15 2v4" stroke="#fff" strokeWidth="1.500" />
        </Svg>
        <Svg size={12}>
          <path d="M1 13h2v2H1zM4.500 11h2v4h-2zM8 8h2v7H8zM11.500 5h2v10h-2z" fill="#fff" />
        </Svg>
        <Svg size={12}>
          <path d="M1 6h3l5-4v12l-5-4H1z" fill="#fff" />
          <path d="M11 5q2 3 0 6M13 3q4 5 0 10" stroke="#fff" />
        </Svg>
      </div>
    </div>
  );
}

function SaveReminder() {
  return (
    <div className="absolute top-[171px] left-[297px] flex h-[204px] w-[329px] flex-col rounded-[5px] border border-[#4c3f3e] bg-[linear-gradient(90deg,#dfcfc8,#efdcd0_20%,#dfc0ad_38%,#eed9cc_58%,#e4cfc5)] px-[5px] pb-[5px] shadow-[1px_2px_7px_2px_rgba(30,20,30,0.6)]">
      <div className="flex h-[21px] shrink-0 items-start justify-between text-[#2c2222]">
        <span className="mt-1 leading-[13px]">定时保存提醒</span>
        <span className="flex h-3.5 w-[35px] items-center justify-center rounded-b-[3px] border border-t-0 border-[#6f3529] bg-[linear-gradient(#ecb09c,#d9694a_45%,#c13f20_50%,#e07c4a)]">
          <svg width="9" height="7" viewBox="0 0 9 7">
            <path d="M1.500 1l6 5M7.500 1l-6 5" stroke="#fff" strokeWidth="1.800" />
          </svg>
        </span>
      </div>
      <div className="flex min-h-0 flex-1 flex-col border border-[#8a6d63] bg-[#f6f0f7] text-[#1c1a1e]">
        <p className="mt-[5px] ml-[5px] h-[18px] shrink-0 whitespace-pre leading-[9px]">
          <Txt>{"  为了保证您的数据安全,系统设置了定时提醒功能,目前的自动提醒间隔"}</Txt>
          <br />
          <Txt>是5分钟.</Txt>
        </p>
        <p className="mt-[9px] ml-[9px] h-[9px] shrink-0 leading-[9px]">
          <Txt>{"您可以到系统设置->其他选项中设置间隔时间及是否需要此选项."}</Txt>
        </p>
        <fieldset className="mt-[31px] mr-[7px] ml-[5px] flex h-[63px] shrink-0 border border-[#e6dfe9] pl-[17px]">
          <legend className="-ml-[13px] px-px leading-[10px]">定时提醒选项</legend>
          <label className="mt-5 flex h-5 w-[120px] items-center gap-0.5">
            <span className="flex h-[9px] w-[9px] items-center justify-center border border-[#a09aa6] bg-[#e8eaf3]">
              <svg width="7" height="7" viewBox="0 0 7 7">
                <path d="M1 3.500l2 2L6 1" stroke="#3f5590" strokeWidth="1.300" fill="none" />
              </svg>
            </span>
            定时提醒保存
          </label>
          <div className="mt-2">
            <div className="h-3 leading-[10px]">
              <Txt>设置新的定时提醒间隔时间:</Txt>
            </div>
            <div className="mt-0.5 flex h-[15px] w-[126px] items-center justify-between rounded-xs border border-[#8e8994] bg-[linear-gradient(#f7f4f8,#e9e5eb_50%,#d9d5dc)] px-0.5">
              <span>
                <Txt>5分钟</Txt>
              </span>
              <span className="mr-0.5 border-x-3 border-t-4 border-x-transparent border-t-[#222]" />
            </div>
          </div>
        </fieldset>
        <div className="mt-auto flex h-[31px] shrink-0 items-center justify-end gap-2.5 border-t border-[#bbb4be] pt-0.5 pr-[7px]">
          <button className="flex h-[17px] w-[55px] items-center justify-center rounded-xs border-2 border-[#4f9fca] bg-[linear-gradient(#eef9fe,#d5effb_50%,#a9dcf5)]">保存</button>
          <button className="flex h-[17px] w-[55px] items-center justify-center rounded-xs border border-[#8e8994] bg-[linear-gradient(#f8f6f9,#ebe8ee_50%,#d8d4db)]">忽略</button>
        </div>
      </div>
    </div>
  );
}

function ImeBar() {
  return (
    <div className="absolute top-[396px] left-[800px] flex h-[18px] w-[121px] items-center border-y border-[#d5d5da] bg-white">
      <span className="-ml-2 flex h-[18px] w-[19px] shrink-0 -rotate-6 items-center justify-center rounded-[3px] border-2 border-[#f7d2bd] bg-[#e8622c] font-['Liberation_Sans',sans-serif] text-[16px] leading-none font-bold text-white">S</span>
      <div className="ml-1 grid shrink-0 grid-cols-[14px_18px_15px_18px_17px_15px_14px] items-center justify-items-center">
        <span className="text-[11px] leading-none font-bold text-[#2470b3]">中</span>
        <Svg size={11}>
          <path d="M10 1c5 4 5 13-3 14-3 .3-5-1-6-3 6 1 10-4 9-11z" fill="#2470b3" />
        </Svg>
        <Svg size={11}>
          <circle cx="4" cy="5" r="2" stroke="#2470b3" strokeWidth="1.500" />
          <path d="M10 9h4c0 3-1 5-3 6 .7-1.500.7-2 .5-3H10z" fill="#2470b3" />
        </Svg>
        <Svg size={13}>
          <path d="M1 3h14v10H1z" stroke="#2470b3" strokeWidth="1.500" />
          <path d="M3 6h10M3 8.500h10" stroke="#2470b3" strokeWidth="1.500" strokeDasharray="1.500 1" />
          <path d="M5 11h6" stroke="#2470b3" strokeWidth="1.500" />
        </Svg>
        <Svg size={12}>
          <circle cx="6" cy="4" r="3" fill="#bcc6d3" />
          <path d="M1 14q0-6 5-6 3 0 4 2v4zM10 9h5v6h-5z" fill="#bcc6d3" />
        </Svg>
        <Svg size={12}>
          <path d="M5 2l3 1.500L11 2l4 3-2 3-1.500-1V14h-7V7L3 8 1 5z" fill="#2470b3" />
        </Svg>
        <Svg size={12}>
          <path d="M2 15l-1-2 8-8q0-3 3-4v4h4q-1 3-4 3z" fill="#2470b3" />
        </Svg>
      </div>
    </div>
  );
}

export default function App() {
  return (
    <div className="relative flex h-[576px] w-[921px] flex-col overflow-hidden bg-[#f7f0f7] font-['Noto_Sans_CJK_SC',sans-serif] text-[9px] leading-[12px]">
      <TitleBar />
      <MenuBar />
      <MainToolbar />

      <main className="flex h-[473px] shrink-0">
        <ProjectTree />
        <div className="flex w-[5px] shrink-0 flex-col">
          <span className="mt-[199px] h-[75px] w-[5px] border border-[#8c8790] bg-[#fbf8fb]" />
        </div>
        <div className="flex w-[800px] flex-col overflow-hidden">
          <SubToolbar />
          <ItemGrid />
          <DetailTabs />
          <div className="flex">
            <ResourceGrid />
            <ActionPanel />
          </div>
        </div>
      </main>

      <StatusBar />
      <TaskBar />
      <div className="h-[5px] shrink-0 bg-[linear-gradient(90deg,#6fa012_282px,#cfc9cc_282px)]" />

      <SaveReminder />
      <ImeBar />

      <svg width="56" height="24" viewBox="0 0 56 24" className="absolute top-[8px] left-[864px] opacity-80">
        <circle cx="9" cy="11" r="7.500" fill="none" stroke="#fff" strokeWidth="3" />
        <path d="M4 16q6-8 9-3t-5 6" fill="none" stroke="#b9a9b0" />
      </svg>
      <span className="absolute top-[13px] left-[888px] text-[12px] leading-none font-bold whitespace-nowrap text-white/60">超凯网</span>
      <svg width="9" height="14" viewBox="0 0 9 14" className="absolute top-[364px] left-[560px]">
        <path d="M.5.5v11l2.500-2.300 1.700 4 1.700-.8-1.700-3.700h3.500z" fill="#fff" stroke="#222" strokeWidth=".8" />
      </svg>
    </div>
  );
}
